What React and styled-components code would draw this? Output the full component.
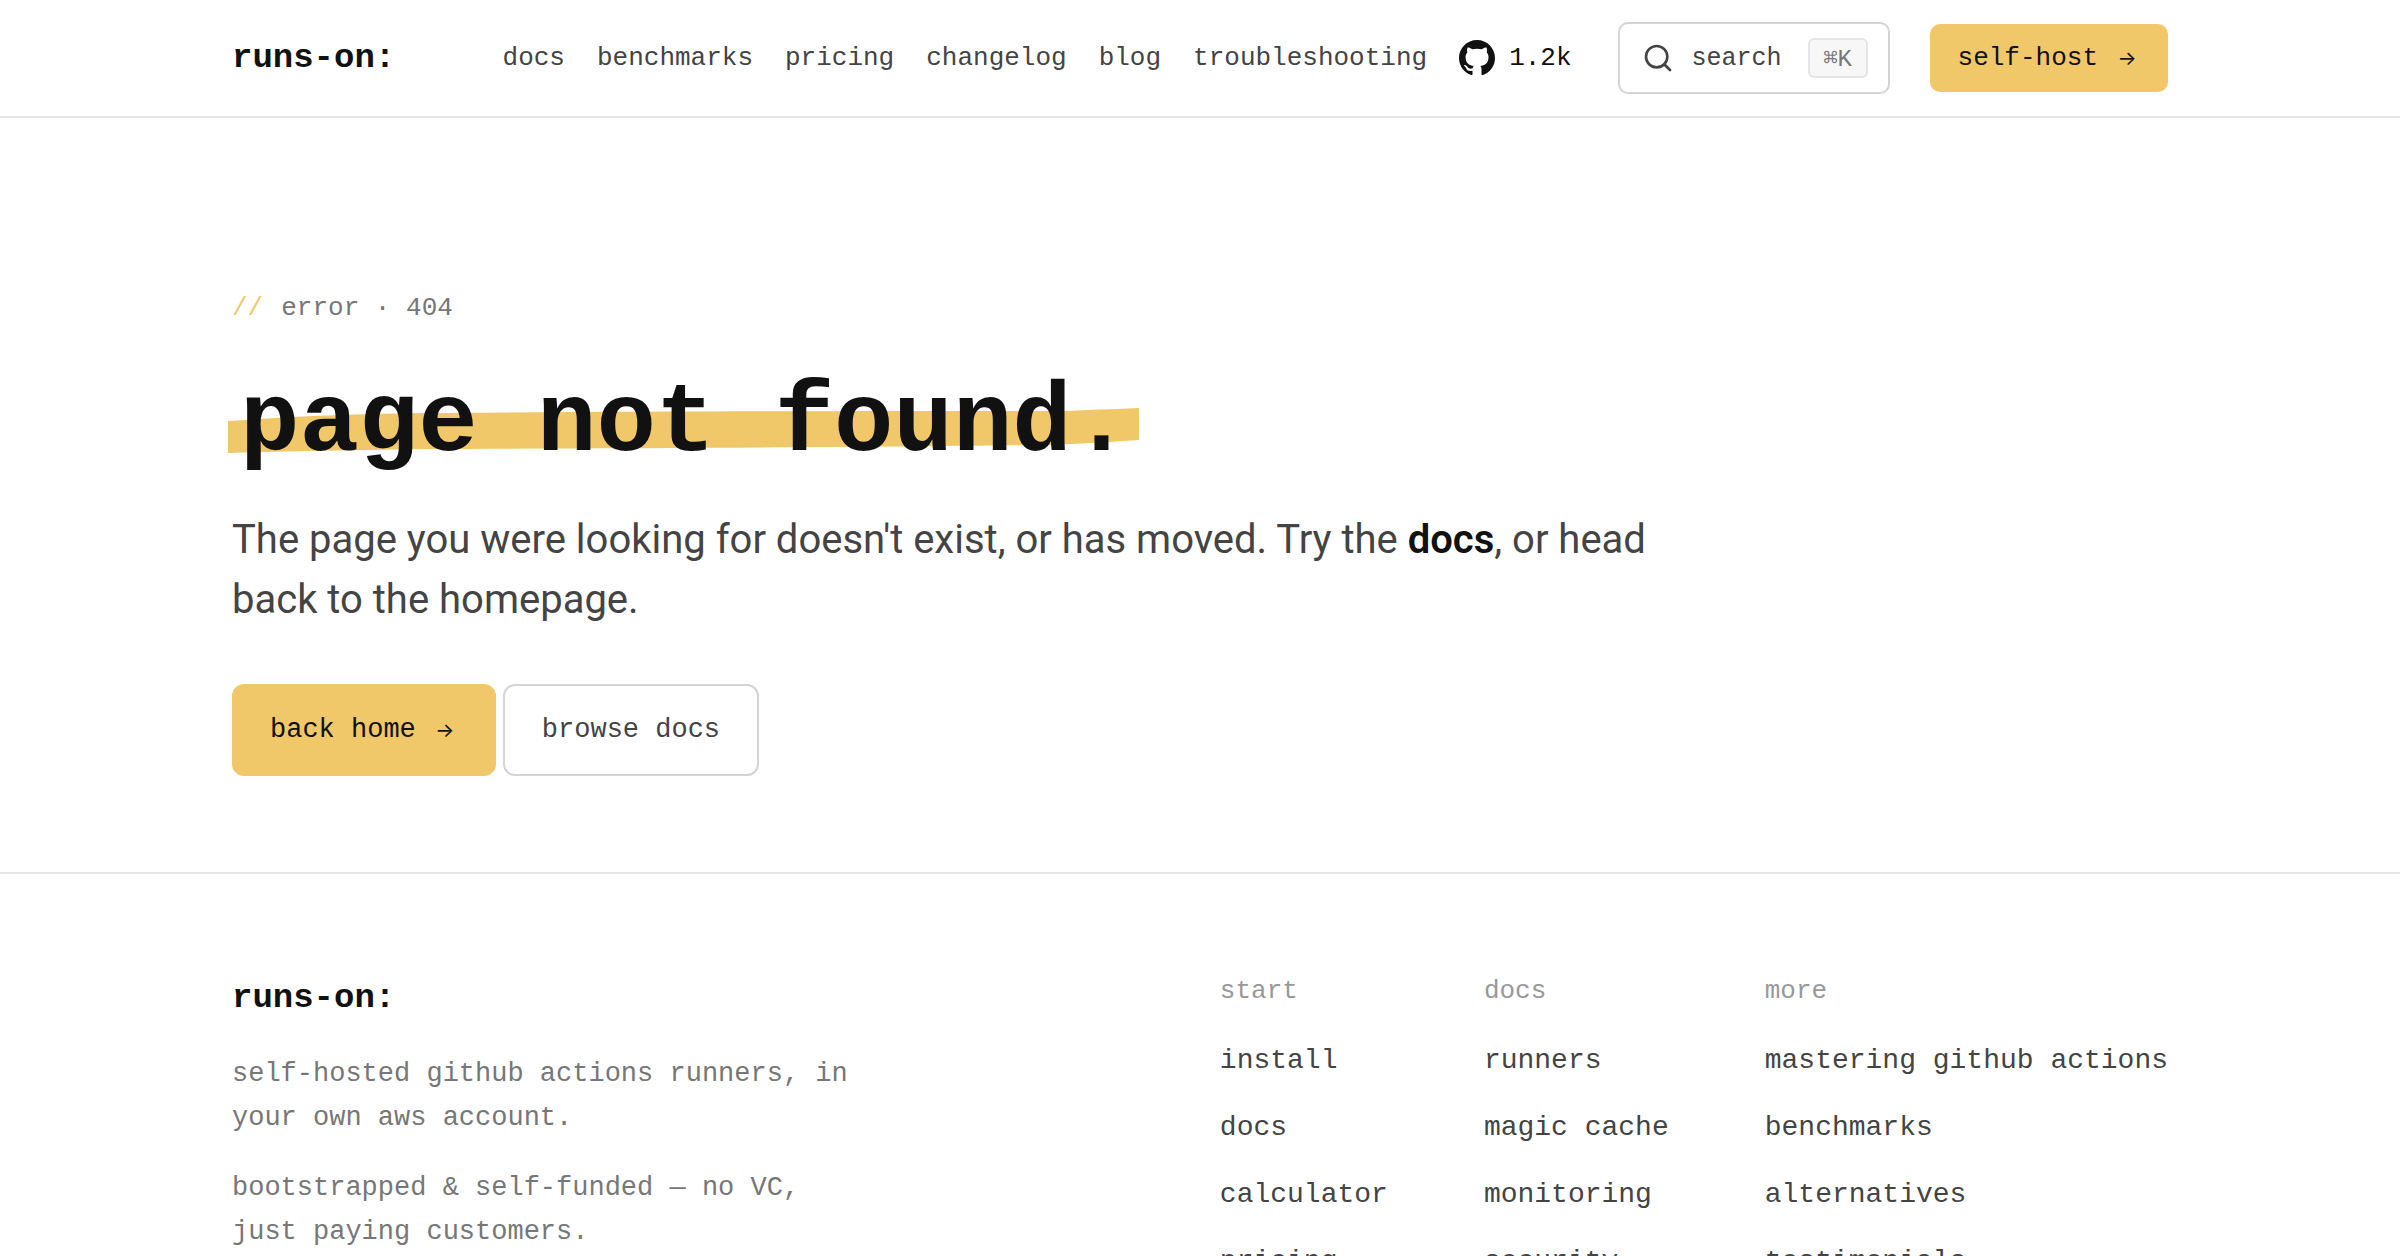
import React from "react";
import styled, { createGlobalStyle, css } from "styled-components";
import { Search } from "lucide-react";

const mono = `"Liberation Mono", "DejaVu Sans Mono", monospace`;
const sans = `Roboto, "Noto Sans", sans-serif`;

const GlobalStyle = createGlobalStyle`
	*, *::before, *::after {
		box-sizing: border-box;
	}

	body {
		margin: 0;
		background-color: #ffffff;
		color: #444444;
		font-family: ${mono};
	}

	a {
		color: inherit;
		text-decoration: none;
	}

	h1, h2, p, ul {
		margin: 0;
		padding: 0;
	}
`;

const Container = styled.div`
	width: 100%;
	max-width: 2000px;
	margin: 0 auto;
	padding: 0 32px;
`;

const Header = styled.header`
	border-bottom: 2px solid #e5e5e5;
`;

const Bar = styled(Container)`
	display: flex;
	align-items: center;
	min-height: 116px;
`;

const Brand = styled.a`
	display: inline-block;
	color: #111111;
	font-size: 34px;
	line-height: 56px;
	font-weight: bold;
`;

const Nav = styled.nav`
	display: flex;
	align-items: center;
	gap: 32px;
	margin-left: auto;
	margin-right: 46px;
	font-size: 26px;
	line-height: 40px;
`;

const Stars = styled.a`
	display: flex;
	align-items: center;
	gap: 14px;
	color: #111111;
`;

const SearchButton = styled.button`
	display: flex;
	align-items: center;
	height: 72px;
	margin-right: 40px;
	padding: 0 20px 0 22px;
	border: 2px solid #d4d4d4;
	border-radius: 10px;
	background-color: #ffffff;
	color: #444444;
	font-family: ${mono};
	font-size: 25px;
`;

const SearchLabel = styled.span`
	margin: 0 26px 0 18px;
`;

const Key = styled.kbd`
	display: flex;
	align-items: center;
	justify-content: center;
	width: 60px;
	height: 40px;
	border: 2px solid #e5e5e5;
	border-radius: 6px;
	background-color: #f7f7f7;
	color: #777777;
	font-family: ${mono};
	font-size: 24px;
`;

const ButtonLink = styled.a`
	display: inline-flex;
	align-items: center;
	gap: 16px;
	height: ${props => (props.$large ? "92px" : "68px")};
	padding: ${props => (props.$large ? "0 38px" : "0 28px")};
	border-radius: ${props => (props.$large ? "12px" : "10px")};
	background-color: #f0c869;
	color: #111111;
	font-size: ${props => (props.$large ? "27px" : "26px")};
	font-weight: 500;

	${props => props.$outline && css`
		padding: 0 37px;
		border: 2px solid #d4d4d4;
		background-color: #ffffff;
		color: #444444;
	`}
`;

const Arrow = styled.span`
	width: 26px;
	font-family: Inter, sans-serif;
	font-size: 20px;
	font-weight: 400;
	text-align: center;
`;

const Hero = styled(Container)`
	padding-top: 170px;
	padding-bottom: 96px;
`;

const Eyebrow = styled.p`
	display: flex;
	gap: 18px;
	color: #777777;
	font-size: 26px;
	line-height: 40px;
`;

const Slashes = styled.span`
	color: #f0c869;
`;

const Title = styled.h1`
	margin-top: 38px;
	color: #111111;
	font-size: 99px;
	line-height: 116px;
	font-weight: bold;
`;

const Marked = styled.span`
	position: relative;
	display: inline-block;
	padding: 0 8px;
	z-index: 0;
`;

/* marker stroke that runs behind the headline */
const Stroke = styled.svg`
	position: absolute;
	left: -4px;
	top: 42px;
	z-index: -1;
	width: calc(100% + 4px);
	height: 46px;
`;

const Lead = styled.p`
	max-width: 1440px;
	margin-top: 28px;
	font-family: ${sans};
	font-size: 40px;
	line-height: 60px;

	a {
		color: #111111;
		font-weight: 600;
	}
`;

const Actions = styled.div`
	display: flex;
	gap: 7px;
	margin-top: 54px;
`;

const Footer = styled.footer`
	border-top: 2px solid #e5e5e5;
`;

const FooterGrid = styled(Container)`
	display: flex;
	justify-content: space-between;
	padding-top: 96px;
	padding-bottom: 96px;
`;

const About = styled.div`
	max-width: 640px;

	p {
		margin-top: 26px;
		color: #777777;
		font-size: 27px;
		line-height: 44px;
	}
`;

const Columns = styled.div`
	display: flex;
	gap: 96px;
`;

const ColumnTitle = styled.h2`
	color: #999999;
	font-size: 26px;
	line-height: 42px;
	font-weight: 500;
`;

const LinkList = styled.ul`
	display: flex;
	flex-direction: column;
	gap: 23px;
	margin-top: 27px;
	list-style: none;
	font-size: 28px;
	line-height: 44px;
`;

const navLinks = ["docs", "benchmarks", "pricing", "changelog", "blog", "troubleshooting"];

const columns = [
	{ title: "start", links: ["install", "docs", "calculator", "pricing"] },
	{ title: "docs", links: ["runners", "magic cache", "monitoring", "security"] },
	{ title: "more", links: ["mastering github actions", "benchmarks", "alternatives", "testimonials"] }
];

const GithubMark = () => (
	<svg width="36" height="36" viewBox="0 0 16 16" fill="currentColor" aria-hidden="true">
		<path d="M8 0C3.58 0 0 3.58 0 8c0 3.54 2.29 6.53 5.47 7.59.4.07.55-.17.55-.38 0-.19-.01-.82-.01-1.49-2.01.37-2.53-.49-2.69-.94-.09-.23-.48-.94-.82-1.13-.28-.15-.68-.52-.01-.53.63-.01 1.08.58 1.23.82.72 1.21 1.87.87 2.33.66.07-.52.28-.87.51-1.07-1.78-.2-3.64-.89-3.64-3.95 0-.87.31-1.59.82-2.15-.08-.2-.36-1.02.08-2.12 0 0 .67-.21 2.2.82.64-.18 1.32-.27 2-.27s1.36.09 2 .27c1.53-1.04 2.2-.82 2.2-.82.44 1.1.16 1.92.08 2.12.51.56.82 1.27.82 2.15 0 3.07-1.87 3.75-3.65 3.95.29.25.54.73.54 1.48 0 1.07-.01 1.93-.01 2.2 0 .21.15.46.55.38A8.01 8.01 0 0 0 16 8c0-4.42-3.58-8-8-8z" />
	</svg>
);

const App = () => (
	<>
		<GlobalStyle />
		<Header>
			<Bar>
				<Brand href="#">runs-on:</Brand>
				<Nav>
					{navLinks.map(link => (
						<a key={link} href={`#${link}`}>{link}</a>
					))}
					<Stars href="#github" aria-label="GitHub stars">
						<GithubMark />
						<span>1.2k</span>
					</Stars>
				</Nav>
				<SearchButton type="button">
					<Search size={32} strokeWidth={2} aria-hidden="true" />
					<SearchLabel>search</SearchLabel>
					<Key>⌘K</Key>
				</SearchButton>
				<ButtonLink href="#self-host">
					self-host <Arrow>→</Arrow>
				</ButtonLink>
			</Bar>
		</Header>

		<main>
			<Hero>
				<Eyebrow>
					<Slashes>//</Slashes>
					<span>error · 404</span>
				</Eyebrow>
				<Title>
					<Marked>
						<Stroke viewBox="0 0 910 46" preserveAspectRatio="none" aria-hidden="true">
							<path
								d="M0 13 C70 8 130 6 200 5 C450 3 650 3 820 3 C850 3 880 1 910 0 V32 C880 34 850 36 820 37 C650 39 450 40 200 41 C130 42 70 43 0 45 Z"
								fill="#f0c869"
							/>
						</Stroke>
						page not found.
					</Marked>
				</Title>
				<Lead>
					The page you were looking for doesn't exist, or has moved. Try the{" "}
					<a href="#docs">docs</a>, or head back to the homepage.
				</Lead>
				<Actions>
					<ButtonLink href="#" $large>
						back home <Arrow>→</Arrow>
					</ButtonLink>
					<ButtonLink href="#docs" $large $outline>browse docs</ButtonLink>
				</Actions>
			</Hero>
		</main>

		<Footer>
			<FooterGrid>
				<About>
					<Brand href="#">runs-on:</Brand>
					<p>self-hosted github actions runners, in your own aws account.</p>
					<p>bootstrapped &amp; self-funded — no VC, just paying customers.</p>
				</About>
				<Columns>
					{columns.map(column => (
						<div key={column.title}>
							<ColumnTitle>{column.title}</ColumnTitle>
							<LinkList>
								{column.links.map(link => (
									<li key={link}><a href={`#${link}`}>{link}</a></li>
								))}
							</LinkList>
						</div>
					))}
				</Columns>
			</FooterGrid>
		</Footer>
	</>
);

export default App;
